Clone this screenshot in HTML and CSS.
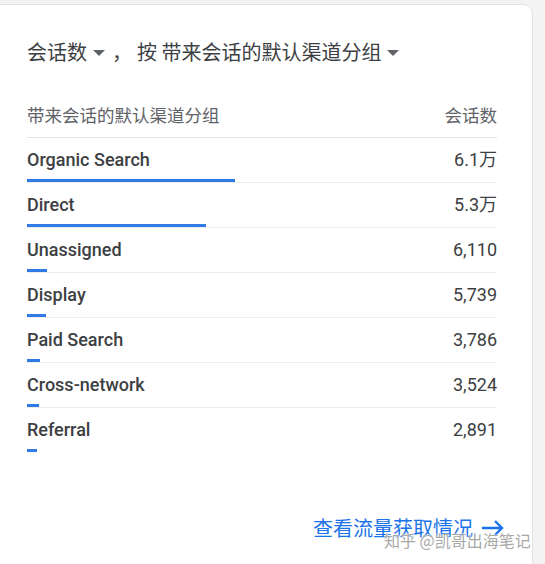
FILE: index.html
```html
<!DOCTYPE html>
<html lang="zh-CN">
<head>
<meta charset="utf-8">
<link rel="stylesheet" href="styles.css">
</head>
<body>
<div class="card">
  <div class="title">
    <span>会话数</span><span class="caret"></span><span class="comma">，</span><span>按 带来会话的默认渠道分组</span><span class="caret"></span>
  </div>
  <div class="table">
    <div class="thead">
      <span>带来会话的默认渠道分组</span>
      <span>会话数</span>
    </div>
    <div class="row">
      <span class="name">Organic Search</span><span class="val">6.1万</span>
      <div class="bar" style="width:208px"></div>
    </div>
    <div class="row">
      <span class="name">Direct</span><span class="val">5.3万</span>
      <div class="bar" style="width:179px"></div>
    </div>
    <div class="row">
      <span class="name">Unassigned</span><span class="val">6,110</span>
      <div class="bar" style="width:20px"></div>
    </div>
    <div class="row">
      <span class="name">Display</span><span class="val">5,739</span>
      <div class="bar" style="width:19px"></div>
    </div>
    <div class="row">
      <span class="name">Paid Search</span><span class="val">3,786</span>
      <div class="bar" style="width:13px"></div>
    </div>
    <div class="row">
      <span class="name">Cross-network</span><span class="val">3,524</span>
      <div class="bar" style="width:12px"></div>
    </div>
    <div class="row last">
      <span class="name">Referral</span><span class="val">2,891</span>
      <div class="bar" style="width:10px"></div>
    </div>
  </div>
  <div class="footer">
    <a class="link">查看流量获取情况 <svg width="24" height="18" viewBox="0 0 24 18"><path d="M1 9 H21 M14 2 L21 9 L14 16" fill="none" stroke="#1a73e8" stroke-width="2.4"/></svg></a>
  </div>
  <div class="watermark">知乎 @凯哥出海笔记</div>
</div>
</body>
</html>
```
FILE: styles.css
```css
html, body {
  margin: 0;
  padding: 0;
}
body {
  background: #f3f3f3;
  width: 545px;
  height: 564px;
  overflow: hidden;
  font-family: "Noto Sans CJK SC", Roboto, sans-serif;
}
.card {
  position: relative;
  box-sizing: border-box;
  margin-top: 4px;
  margin-left: -12px;
  width: 545px;
  height: 600px;
  background: #fff;
  border: 1px solid #e2e2e2;
  border-radius: 10px;
  padding: 0 35px 0 38px;
}
.title {
  display: flex;
  align-items: center;
  margin-top: 34px;
  height: 26px;
  font-size: 20px;
  color: #3c4043;
  line-height: 26px;
}
.caret {
  width: 0;
  height: 0;
  border-left: 6px solid transparent;
  border-right: 6px solid transparent;
  border-top: 6px solid #5f6368;
  margin: 2px 7px 0 6px;
}
.comma {
  margin-right: 5px;
}
.table {
  margin-top: 37px;
}
.thead {
  display: flex;
  justify-content: space-between;
  font-size: 17.5px;
  color: #5f6368;
  line-height: 26px;
  padding-bottom: 9px;
  border-bottom: 1px solid #e3e3e3;
}
.row {
  display: grid;
  grid-template-columns: 1fr auto;
  padding-top: 10px;
  border-bottom: 1px solid #ececec;
  height: 45px;
  box-sizing: border-box;
  align-content: start;
}
.row.last {
  border-bottom: none;
}
.name {
  font-family: Roboto, "Noto Sans CJK SC", sans-serif;
  font-weight: 500;
  font-size: 18px;
  line-height: 24px;
  color: #3c4043;
}
.val {
  font-family: Roboto, "Noto Sans CJK SC", sans-serif;
  font-size: 18px;
  line-height: 24px;
  color: #3c4043;
}
.bar {
  grid-column: 1 / 3;
  height: 3px;
  background: #2f7ae5;
  margin-top: 7px;
}
.footer {
  display: flex;
  justify-content: flex-end;
  margin-top: 62px;
  margin-right: -8px;
}
.link {
  display: flex;
  align-items: center;
  gap: 8px;
  font-size: 20px;
  color: #1a73e8;
  line-height: 26px;
}
.watermark {
  position: absolute;
  left: 395px;
  top: 523px;
  font-size: 16px;
  color: #a8a8a8;
  text-shadow: 0 0 2px #fff, 0 0 2px #fff;
}
```
